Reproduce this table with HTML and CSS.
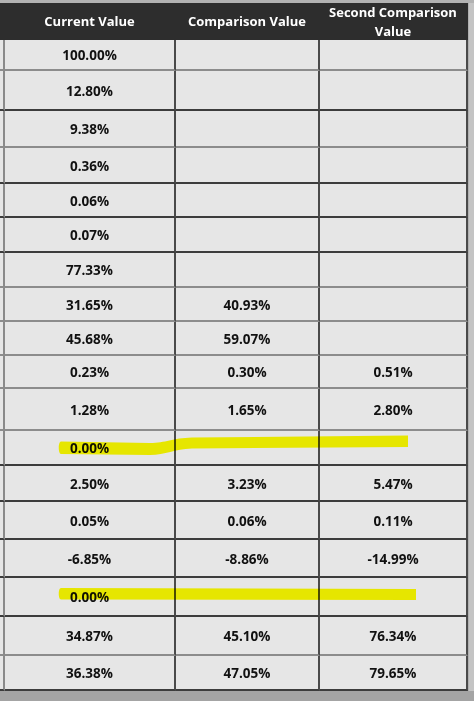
FILE: index.html
```html
<!DOCTYPE html>
<html>
<head>
<meta charset="utf-8">
<link rel="stylesheet" href="styles.css">
</head>
<body>
<div class="page">
  <div class="top-band"></div>
  <div class="main">
    <div class="grid">
      <div class="row head">
        <div class="cell edge"></div>
        <div class="cell">Current Value</div>
        <div class="cell">Comparison Value</div>
        <div class="cell">Second Comparison Value</div>
      </div>
      <div class="row lt"><div class="cell edge"></div><div class="cell">100.00%</div><div class="cell"></div><div class="cell"></div></div>
      <div class="row dk"><div class="cell edge"></div><div class="cell">12.80%</div><div class="cell"></div><div class="cell"></div></div>
      <div class="row lt"><div class="cell edge"></div><div class="cell">9.38%</div><div class="cell"></div><div class="cell"></div></div>
      <div class="row dk"><div class="cell edge"></div><div class="cell">0.36%</div><div class="cell"></div><div class="cell"></div></div>
      <div class="row dk"><div class="cell edge"></div><div class="cell">0.06%</div><div class="cell"></div><div class="cell"></div></div>
      <div class="row dk"><div class="cell edge"></div><div class="cell">0.07%</div><div class="cell"></div><div class="cell"></div></div>
      <div class="row lt"><div class="cell edge"></div><div class="cell">77.33%</div><div class="cell"></div><div class="cell"></div></div>
      <div class="row lt"><div class="cell edge"></div><div class="cell">31.65%</div><div class="cell">40.93%</div><div class="cell"></div></div>
      <div class="row lt"><div class="cell edge"></div><div class="cell">45.68%</div><div class="cell">59.07%</div><div class="cell"></div></div>
      <div class="row lt"><div class="cell edge"></div><div class="cell">0.23%</div><div class="cell">0.30%</div><div class="cell">0.51%</div></div>
      <div class="row lt"><div class="cell edge"></div><div class="cell">1.28%</div><div class="cell">1.65%</div><div class="cell">2.80%</div></div>
      <div class="row dk"><div class="cell edge"></div><div class="cell">0.00%</div><div class="cell"></div><div class="cell"></div></div>
      <div class="row dk"><div class="cell edge"></div><div class="cell">2.50%</div><div class="cell">3.23%</div><div class="cell">5.47%</div></div>
      <div class="row dk"><div class="cell edge"></div><div class="cell">0.05%</div><div class="cell">0.06%</div><div class="cell">0.11%</div></div>
      <div class="row dk"><div class="cell edge"></div><div class="cell">-6.85%</div><div class="cell">-8.86%</div><div class="cell">-14.99%</div></div>
      <div class="row dk"><div class="cell edge"></div><div class="cell">0.00%</div><div class="cell"></div><div class="cell"></div></div>
      <div class="row lt"><div class="cell edge"></div><div class="cell">34.87%</div><div class="cell">45.10%</div><div class="cell">76.34%</div></div>
      <div class="row dk"><div class="cell edge"></div><div class="cell">36.38%</div><div class="cell">47.05%</div><div class="cell">79.65%</div></div>
    </div>
    <div class="vscroll"></div>
  </div>
  <div class="bottom-band"></div>
  <svg class="marks" width="474" height="701" viewBox="0 0 474 701">
    <path d="M61,441.5 L150,443 C166,443 172,438 192,437.5 L408,435.5 L408,447 L192,448.5 C174,449 166,455 150,455 L61,454 C58,454 58,441.5 61,441.5 Z" fill="#ffff00"/>
    <path d="M61,588 L416,589 L416,600 L61,599.5 C58,599.5 58,588 61,588 Z" fill="#ffff00"/>
  </svg>
</div>
</body>
</html>
```
FILE: styles.css
```css
html, body {
  margin: 0;
  padding: 0;
}
body {
  background: #c6c6c6;
  font-family: "Open Sans", "Noto Sans", sans-serif;
}
.page {
  position: relative;
  width: 474px;
  height: 701px;
  display: flex;
  flex-direction: column;
  overflow: hidden;
}
.top-band {
  height: 3px;
  background: #b2b2b2;
}
.main {
  display: flex;
  height: 688px;
}
.grid {
  width: 468px;
  display: grid;
  grid-template-columns: 5px 171px 144px 148px;
  grid-template-rows: 37px 31px 40px 37px 36px 34px 35px 35px 34px 34px 33px 42px 35px 36px 38px 38px 39px 39px 35px;
  background: #e6e6e6;
}
.row {
  display: contents;
}
.cell {
  box-sizing: border-box;
  display: flex;
  align-items: center;
  justify-content: center;
  text-align: center;
  border-right: 2px solid #4a4a4a;
  border-bottom: 2px solid #3c3c3c;
  background: #e6e6e6;
  color: #111;
  font-weight: 700;
  font-size: 13.5px;
  padding-top: 1px;
}
.cell.edge {
  border-right-color: #8a8a8a;
}
.row.lt > .cell {
  border-bottom-color: #8c8c8c;
}
.row.dk > .cell {
  border-bottom-color: #3c3c3c;
}
.row.head > .cell {
  background: #2d2d2d;
  color: #ffffff;
  border-bottom: none;
  border-right-color: #2d2d2d;
  font-size: 13px;
  line-height: 19px;
  padding: 0 8px;
}
.row.head > .cell.edge {
  padding: 0;
}
.vscroll {
  width: 6px;
  background: #c4c4c4;
  border-left: 1px solid #b0b0b0;
}
.bottom-band {
  height: 10px;
  background: #a4a4a4;
}
.marks {
  position: absolute;
  left: 0;
  top: 0;
  pointer-events: none;
  mix-blend-mode: multiply;
}
```
